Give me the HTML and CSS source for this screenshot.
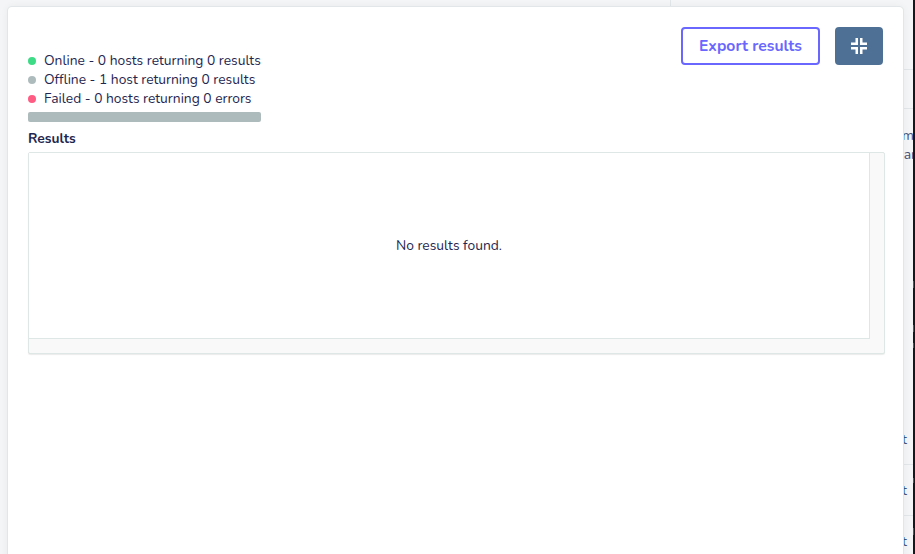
FILE: index.html
```html
<!DOCTYPE html>
<html lang="en">
<head>
    <meta charset="UTF-8">
    <meta name="viewport" content="width=device-width, initial-scale=1.0">
    <title>Query results</title>
    <link rel="stylesheet" href="styles.css">
</head>
<body>

    <!-- Page behind the modal, only its right edge shows -->
    <div class="backdrop">
        <div class="side-panel">
            <div class="side-row side-row-head"></div>
            <div class="side-row side-row-sub"></div>
            <div class="side-row side-row-text">
                <span class="side-cut">om</span>
                <span class="side-cut side-cut-far">an</span>
                <span class="side-tail">t</span>
            </div>
            <div class="side-row side-row-short"><span class="side-end">t</span></div>
            <div class="side-row side-row-short"><span class="side-end">t</span></div>
        </div>
        <div class="edge"></div>
    </div>

    <div class="modal">
        <div class="top-row">
            <div class="status-block">
                <div class="status-line"><span class="dot dot-online"></span>Online - 0 hosts returning 0 results</div>
                <div class="status-line"><span class="dot dot-offline"></span>Offline - 1 host returning 0 results</div>
                <div class="status-line"><span class="dot dot-failed"></span>Failed - 0 hosts returning 0 errors</div>
                <div class="progress"></div>
            </div>
            <div class="actions">
                <button class="btn-export">Export results</button>
                <button class="btn-collapse" aria-label="Exit fullscreen">
                    <svg width="16" height="16" viewBox="0 0 16 16">
                        <path d="M4.5 0H7V7H0V4.5H4.5ZM9 0h2.5V4.5H16V7H9ZM0 9H7v7H4.5V11.5H0ZM9 9h7v2.5H11.5V16H9Z" fill="#fff"/>
                    </svg>
                </button>
            </div>
        </div>
        <h2 class="results-title">Results</h2>
        <div class="results-box">
            <div class="results-inner">
                <div class="results-empty">No results found.</div>
                <div class="scroll-v"></div>
            </div>
            <div class="scroll-h"></div>
        </div>
    </div>

</body>
</html>
```

FILE: styles.css
```css
* {
    box-sizing: border-box;
}

body {
    margin: 0;
    height: 554px;
    overflow: hidden;
    background-color: #fff;
    font-family: "Nunito", "Open Sans", "Noto Sans", sans-serif;
    color: #1f2750;
    display: flex;
    justify-content: flex-start;
    padding: 7px 0 0 8px;
}

/* Page behind the modal */
.backdrop {
    position: absolute;
    top: 0;
    left: 0;
    width: 915px;
    height: 554px;
    display: flex;
    justify-content: flex-end;
    background-color: #f4f5f7;
}

.side-panel {
    width: 243px;
    height: 100%;
    border-left: 1px solid #e2e6e8;
    display: flex;
    flex-direction: column;
    font-size: 14px;
    color: #48527a;
}

.side-row {
    width: 100%;
    flex-shrink: 0;
    border-bottom: 1px solid #e2e6e8;
    overflow: hidden;
    text-align: right;
}

.side-row span {
    display: block;
    line-height: 19px;
}

.side-row-head { height: 70px; }
.side-row-sub { height: 39px; }
.side-row-text { height: 356px; padding-top: 17px; }
.side-row-short { height: 51px; padding-top: 16px; }

.side-cut { margin-right: -1px; }
.side-cut-far { margin-right: -6px; }
.side-tail { margin-top: 266px; padding-right: 6px; }
.side-end { padding-right: 6px; }

/* Dark strip, the small marks are clipped text on it */
.edge {
    width: 2px;
    height: 100%;
    background:
        linear-gradient(to bottom,
            transparent 281px, #555 281px, #555 288px,
            transparent 288px, transparent 325px, #555 325px, #555 332px,
            transparent 332px, transparent 343px, #555 343px, #555 348px,
            transparent 348px, transparent 478px, #555 478px, #555 483px,
            transparent 483px, transparent 528px, #555 528px, #555 535px,
            transparent 535px) left top / 1px 100% no-repeat,
        #15171c;
}

/* Modal */
.modal {
    position: relative;
    width: 895px;
    height: 560px;
    flex-shrink: 0;
    background-color: #fff;
    border-radius: 4px;
    box-shadow: 0 0 0 1px #e2e6e8, 0 0 8px rgba(0, 0, 0, 0.06);
    padding: 20px;
}

.top-row {
    display: flex;
    justify-content: space-between;
    align-items: flex-start;
}

.status-block {
    width: 233px;
    padding-top: 24px;
}

.status-line {
    display: flex;
    align-items: center;
    height: 19px;
    font-size: 13.8px;
    white-space: nowrap;
}

.dot {
    flex-shrink: 0;
    width: 8px;
    height: 8px;
    border-radius: 50%;
    margin-right: 8px;
}

.dot-online { background-color: #3ddb85; }
.dot-offline { background-color: #aebbbc; }
.dot-failed { background-color: #ff5c83; }

.progress {
    height: 10px;
    margin-top: 4px;
    border-radius: 2px;
    background-color: #aebbbc;
}

.actions {
    display: flex;
    gap: 15px;
}

.btn-export {
    width: 139px;
    height: 38px;
    background-color: #fff;
    border: 2px solid #6a67fe;
    border-radius: 4px;
    color: #6a67fe;
    font-family: inherit;
    font-size: 15.7px;
    font-weight: bold;
}

.btn-collapse {
    width: 48px;
    height: 38px;
    padding: 0;
    border: 0;
    border-radius: 4px;
    background-color: #4f7095;
    display: flex;
    align-items: center;
    justify-content: center;
}

.results-title {
    margin: 7px 0 4px;
    font-size: 13.8px;
    line-height: 19px;
    font-weight: bold;
}

.results-box {
    width: 857px;
    height: 202px;
    border: 1px solid #dfe6e6;
    border-radius: 2px;
    background-color: #f9f9f9;
    box-shadow: 0 1px 1px rgba(0, 0, 0, 0.08);
    display: flex;
    flex-direction: column;
}

.results-inner {
    flex: 1;
    display: flex;
}

.results-empty {
    flex: 1;
    background-color: #fff;
    border-bottom: 1px solid #dfe6e6;
    border-right: 1px solid #dfe6e6;
    display: flex;
    align-items: center;
    justify-content: center;
    font-size: 13.8px;
}

.scroll-v { width: 14px; }
.scroll-h { height: 14px; }
```
